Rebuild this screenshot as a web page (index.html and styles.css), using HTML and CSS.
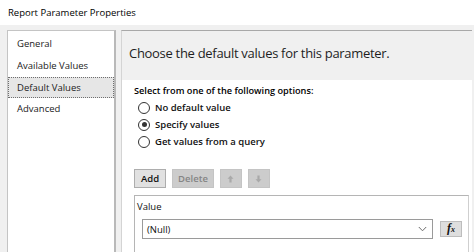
FILE: index.html
```html
<!DOCTYPE html>
<html>
<head>
<meta charset="utf-8">
<link rel="stylesheet" href="styles.css">
</head>
<body>
	<div class="titlebar">Report Parameter Properties</div>
	<div class="dialog">
		<ul class="nav">
			<li class="navitem">General</li>
			<li class="navitem">Available Values</li>
			<li class="navitem selected">Default Values</li>
			<li class="navitem">Advanced</li>
		</ul>
		<div class="page">
			<div class="pagehead">Choose the default values for this parameter.</div>
			<div class="pagebody">
				<p class="prompt">Select from one of the following options:</p>
				<div class="options">
					<label class="option"><span class="radio"></span>No default value</label>
					<label class="option"><span class="radio checked"></span>Specify values</label>
					<label class="option"><span class="radio"></span>Get values from a query</label>
				</div>
				<div class="toolbar">
					<button class="btn">Add</button>
					<button class="btn disabled">Delete</button>
					<button class="btn disabled arrow">
						<svg width="7" height="8" viewBox="0 0 7 8"><path d="M3.5 0.5 L6.5 3.8 L4.6 3.8 L4.6 7.5 L2.4 7.5 L2.4 3.8 L0.5 3.8 Z" fill="#a9a9a9"/></svg>
					</button>
					<button class="btn disabled arrow">
						<svg width="7" height="8" viewBox="0 0 7 8"><path d="M3.5 7.5 L6.5 4.2 L4.6 4.2 L4.6 0.5 L2.4 0.5 L2.4 4.2 L0.5 4.2 Z" fill="#a9a9a9"/></svg>
					</button>
				</div>
				<div class="valuegrid">
					<div class="gridhead">Value</div>
					<div class="gridrow">
						<div class="combo">
							<span>(Null)</span>
							<svg width="9" height="6" viewBox="0 0 9 6"><path d="M0.8 1 L4.5 4.8 L8.2 1" fill="none" stroke="#6d6d6d" stroke-width="1"/></svg>
						</div>
						<button class="fx">f<span>x</span></button>
					</div>
				</div>
			</div>
		</div>
	</div>
</body>
</html>
```

FILE: styles.css
```css
body {
	margin: 0px;
	width: 474px;
	height: 252px;
	overflow: hidden;
	background-color: #f0f0f0;
	font-family: "Open Sans", "Noto Sans", sans-serif;
	color: #000000;
}
.titlebar {
	height: 25px;
	line-height: 25px;
	padding-left: 8px;
	background-color: #ffffff;
	font-size: 9.5px;
}
.dialog {
	display: flex;
	padding: 5px 2px 0px 7px;
	gap: 5px;
	height: 227px;
	box-sizing: border-box;
}
.nav {
	list-style: none;
	margin: 0;
	padding: 2px 0px 0px 0px;
	width: 106px;
	background-color: #ffffff;
	border: 1px solid #c4c4c4;
	border-bottom: none;
	border-right: 2px solid #b9b9b9;
}
.navitem {
	height: 22px;
	line-height: 21px;
	padding-left: 9px;
	font-size: 9.5px;
	color: #222222;
	box-sizing: border-box;
}
.selected {
	background-color: #e6e6e6;
	border: 1px dotted #6e6e6e;
	padding-left: 8px;
	line-height: 19px;
	height: 21px;
}
.page {
	flex: 1;
	background-color: #ffffff;
	border-top: 1px solid #a8a8a8;
	border-left: 1px solid #d4d4d4;
}
.pagehead {
	height: 49px;
	padding: 13px 0px 0px 7px;
	box-sizing: border-box;
	background-color: #f0f0f0;
	font-size: 13px;
	letter-spacing: -0.3px;
	color: #1e1e1e;
}
.pagebody {
	padding: 3px 3px 0px 12px;
}
.prompt {
	margin: 0;
	font-size: 9.2px;
	font-weight: 600;
	height: 16px;
	line-height: 16px;
}
.options {
	display: flex;
	flex-direction: column;
	padding-left: 4px;
}
.option {
	display: flex;
	align-items: center;
	height: 17px;
	font-size: 9.5px;
	font-weight: 600;
	color: #111111;
}
.radio {
	width: 10px;
	height: 10px;
	border: 1px solid #333333;
	border-radius: 50%;
	margin-right: 5px;
	position: relative;
	background-color: #ffffff;
}
.radio.checked::after {
	content: "";
	position: absolute;
	left: 2.5px;
	top: 2.5px;
	width: 5px;
	height: 5px;
	border-radius: 50%;
	background-color: #333333;
}
.toolbar {
	display: flex;
	gap: 6px;
	margin-top: 19px;
}
.btn {
	height: 19px;
	padding: 0px 6px;
	background-color: #e1e1e1;
	border: 1px solid #adadad;
	font-family: inherit;
	font-size: 9.5px;
	font-weight: 600;
	color: #111111;
}
.btn.disabled {
	background-color: #cccccc;
	border-color: #c4c4c4;
	color: #858585;
	padding: 0px 5px;
}
.btn.arrow {
	width: 22px;
	display: flex;
	align-items: center;
	justify-content: center;
	padding: 0;
}
.valuegrid {
	margin-top: 7px;
	height: 58px;
	border: 1px solid #b5b5b5;
	border-right: 1px solid #cfcfcf;
	background-color: #ffffff;
}
.gridhead {
	height: 22px;
	line-height: 21px;
	padding-left: 2px;
	font-size: 9.5px;
	color: #111111;
}
.gridrow {
	display: flex;
	align-items: center;
	gap: 7px;
	padding: 1px 6px 0px 7px;
}
.combo {
	flex: 1;
	height: 18px;
	border: 1px solid #9a9a9a;
	display: flex;
	align-items: center;
	justify-content: space-between;
	padding: 0px 5px 0px 4px;
	font-size: 9.5px;
	color: #111111;
}
.fx {
	width: 22px;
	height: 16px;
	padding: 0;
	background-color: #dedede;
	border: 1px solid #bdbdbd;
	font-family: "Liberation Serif", serif;
	font-style: italic;
	font-weight: bold;
	font-size: 12px;
	line-height: 12px;
	color: #111111;
}
.fx span {
	font-size: 8px;
}
```
